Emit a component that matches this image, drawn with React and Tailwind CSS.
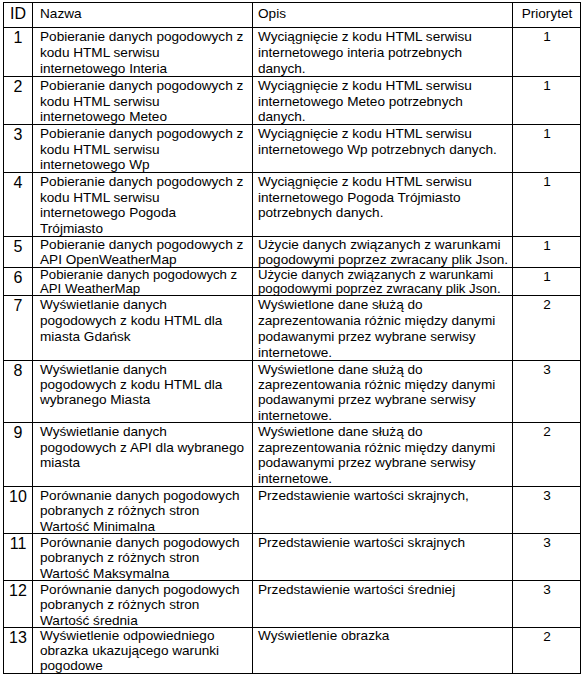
const rows = [
  {
    id: '1', h: 'h-[49px]', p: '1', lh: 'leading-[16px]',
    name: ['Pobieranie danych pogodowych z', 'kodu HTML serwisu', 'internetowego Interia'],
    desc: ['Wyciągnięcie z kodu HTML serwisu', 'internetowego interia potrzebnych', 'danych.'],
  },
  {
    id: '2', h: 'h-[48px]', p: '1', lh: 'leading-[15.6px]',
    name: ['Pobieranie danych pogodowych z', 'kodu HTML serwisu', 'internetowego Meteo'],
    desc: ['Wyciągnięcie z kodu HTML serwisu', 'internetowego Meteo potrzebnych', 'danych.'],
  },
  {
    id: '3', h: 'h-[48px]', p: '1', lh: 'leading-[15.6px]',
    name: ['Pobieranie danych pogodowych z', 'kodu HTML serwisu', 'internetowego Wp'],
    desc: ['Wyciągnięcie z kodu HTML serwisu', 'internetowego Wp potrzebnych danych.'],
  },
  {
    id: '4', h: 'h-[64px]', p: '1', lh: 'leading-[15.7px]',
    name: ['Pobieranie danych pogodowych z', 'kodu HTML serwisu', 'internetowego Pogoda', 'Trójmiasto'],
    desc: ['Wyciągnięcie z kodu HTML serwisu', 'internetowego Pogoda Trójmiasto', 'potrzebnych danych.'],
  },
  {
    id: '5', h: 'h-[31px]', p: '1', lh: 'leading-[14.8px]',
    name: ['Pobieranie danych pogodowych z', 'API OpenWeatherMap'],
    desc: ['Użycie danych związanych z warunkami', 'pogodowymi poprzez zwracany plik Json.'],
  },
  {
    id: '6', h: 'h-[28px]', p: '1', lh: 'leading-[13.5px] text-[13.2px] !pt-0',
    name: ['Pobieranie danych pogodowych z', 'API WeatherMap'],
    desc: ['Użycie danych związanych z warunkami', 'pogodowymi poprzez zwracany plik Json.'],
  },
  {
    id: '7', h: 'h-[65px]', p: '2', lh: 'leading-[15.9px]',
    name: ['Wyświetlanie danych', 'pogodowych z kodu HTML dla', 'miasta Gdańsk'],
    desc: ['Wyświetlone dane służą do', 'zaprezentowania różnic między danymi', 'podawanymi przez wybrane serwisy', 'internetowe.'],
  },
  {
    id: '8', h: 'h-[62px]', p: '3', lh: 'leading-[15.2px]',
    name: ['Wyświetlanie danych', 'pogodowych z kodu HTML dla', 'wybranego Miasta'],
    desc: ['Wyświetlone dane służą do', 'zaprezentowania różnic między danymi', 'podawanymi przez wybrane serwisy', 'internetowe.'],
  },
  {
    id: '9', h: 'h-[64px]', p: '2', lh: 'leading-[15.7px]',
    name: ['Wyświetlanie danych', 'pogodowych z API dla wybranego', 'miasta'],
    desc: ['Wyświetlone dane służą do', 'zaprezentowania różnic między danymi', 'podawanymi przez wybrane serwisy', 'internetowe.'],
  },
  {
    id: '10', h: 'h-[47px]', p: '3', lh: 'leading-[15.3px]',
    name: ['Porównanie danych pogodowych', 'pobranych z różnych stron', 'Wartość Minimalna'],
    desc: ['Przedstawienie wartości skrajnych,'],
  },
  {
    id: '11', h: 'h-[47px]', p: '3', lh: 'leading-[15.3px]',
    name: ['Porównanie danych pogodowych', 'pobranych z różnych stron', 'Wartość Maksymalna'],
    desc: ['Przedstawienie wartości skrajnych'],
  },
  {
    id: '12', h: 'h-[47px]', p: '3', lh: 'leading-[15.3px]',
    name: ['Porównanie danych pogodowych', 'pobranych z różnych stron', 'Wartość średnia'],
    desc: ['Przedstawienie wartości średniej'],
  },
  {
    id: '13', h: 'h-[46px]', p: '2', lh: 'leading-[14.9px]',
    name: ['Wyświetlenie odpowiedniego', 'obrazka ukazującego warunki', 'pogodowe'],
    desc: ['Wyświetlenie obrazka'],
  },
]

const cell = 'border-l border-t border-black pt-[1px] whitespace-nowrap'

function Lines({ lines }) {
  return lines.map((l, i) => <div key={i}>{l}</div>)
}

export default function App() {
  return (
    <div className="bg-white w-[583px] h-[677px] pt-[2px] pl-[3px] text-black text-[13.6px]" style={{ fontFamily: '"Liberation Sans", Arial, sans-serif' }}>
      <div className="w-[578px] grid grid-cols-[29px_220px_260px_69px] border-r border-b border-black">
        {/* header */}
        <div className={`${cell} h-[25px] text-center text-[16px] leading-[20px]`}>ID</div>
        <div className={`${cell} h-[25px] pl-[7px] pt-[3px] leading-[16px]`}>Nazwa</div>
        <div className={`${cell} h-[25px] pl-[5px] pt-[3px] leading-[16px]`}>Opis</div>
        <div className={`${cell} h-[25px] text-center pt-[3px] leading-[16px]`}>Priorytet</div>

        {rows.map(r => (
          <div key={r.id} className="contents">
            <div className={`${cell} ${r.h} text-center text-[16px] leading-[18px]`}>{r.id}</div>
            <div className={`${cell} ${r.h} pl-[7px] ${r.lh}`}><Lines lines={r.name} /></div>
            <div className={`${cell} ${r.h} pl-[5px] ${r.lh}`}><Lines lines={r.desc} /></div>
            <div className={`${cell} ${r.h} text-center leading-[16px]`}>{r.p}</div>
          </div>
        ))}
      </div>
    </div>
  )
}
